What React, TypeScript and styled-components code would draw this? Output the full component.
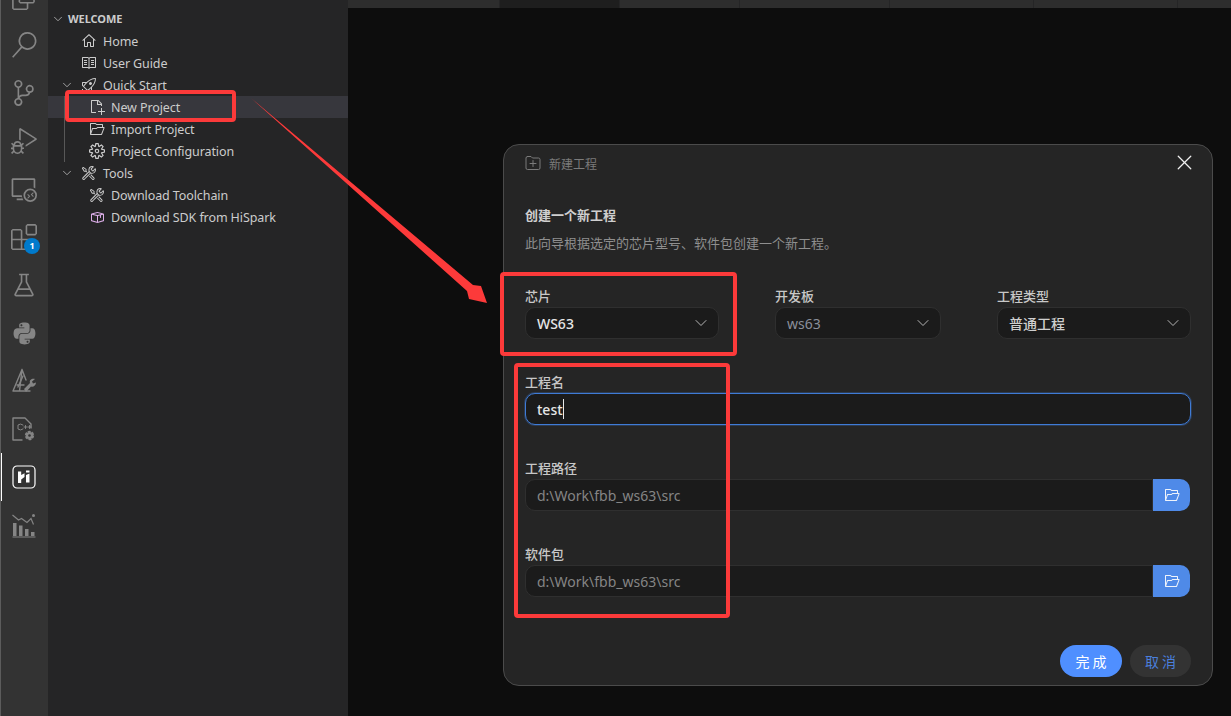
import React from 'react';
import styled, { createGlobalStyle } from 'styled-components';
import { ChevronDown, X } from 'lucide-react';
import {
  VscFiles,
  VscSearch,
  VscSourceControl,
  VscDebugAlt,
  VscRemoteExplorer,
  VscExtensions,
  VscBeaker,
  VscHome,
  VscBook,
  VscRocket,
  VscNewFile,
  VscFolderOpened,
  VscSettingsGear,
  VscTools,
  VscPackage,
} from 'react-icons/vsc';
import { FaPython } from 'react-icons/fa';

const UI_FONT = `"Noto Sans", "Noto Sans CJK SC", sans-serif`;
const CJK_FONT = `"Noto Sans CJK SC", "Noto Sans", sans-serif`;

const GlobalStyle = createGlobalStyle`
  html, body {
    margin: 0;
    height: 100%;
    overflow: hidden;
    background: #0d0d0d;
  }
  * {
    box-sizing: border-box;
  }
`;

const Screen = styled.div`
  position: relative;
  display: flex;
  width: 1231px;
  height: 716px;
  overflow: hidden;
  font-family: ${UI_FONT};
`;

const ActivityBar = styled.nav`
  flex: 0 0 48px;
  height: 100%;
  overflow: hidden;
  background: #333333;
  border-left: 1px solid #5c5c5c;
`;

const ActivityList = styled.div`
  display: flex;
  flex-direction: column;
  margin-top: -27px;
  margin-left: -1px;
`;

const ActivityItem = styled.div<{ $active?: boolean }>`
  position: relative;
  display: flex;
  align-items: center;
  justify-content: center;
  width: 48px;
  height: 48px;
  color: ${(p) => (p.$active ? '#ffffff' : '#858585')};
  border-left: 2px solid ${(p) => (p.$active ? '#ffffff' : 'transparent')};
  padding-right: 2px;
`;

const Badge = styled.span`
  position: absolute;
  left: 22px;
  top: 25px;
  width: 16px;
  height: 16px;
  border-radius: 50%;
  background: #007acc;
  color: #ffffff;
  font-size: 9px;
  font-weight: 700;
  line-height: 16px;
  text-align: center;
`;

const Sidebar = styled.aside`
  flex: 0 0 300px;
  height: 100%;
  padding-top: 8px;
  background: #252526;
`;

const SectionTitle = styled.div`
  display: flex;
  align-items: center;
  gap: 3px;
  height: 22px;
  padding: 0 0 1px 3px;
  color: #cccccc;
  font-size: 11px;
  font-weight: 700;
  letter-spacing: -0.05px;
`;

const TreeRow = styled.div<{ $depth: number; $selected?: boolean }>`
  position: relative;
  display: flex;
  align-items: center;
  height: 22px;
  padding-left: ${(p) => (p.$depth === 2 ? 41 : 11)}px;
  color: #cccccc;
  font-size: 12.5px;
  letter-spacing: -0.1px;
  background: ${(p) => (p.$selected ? '#37373d' : 'transparent')};
`;

const Twistie = styled.span`
  display: flex;
  justify-content: center;
  width: 16px;
  margin-right: 6px;
  color: #c5c5c5;
`;

const RowIcon = styled.span<{ $tint?: string }>`
  display: flex;
  align-items: center;
  justify-content: center;
  width: 16px;
  height: 16px;
  margin-right: 6px;
  color: ${(p) => p.$tint ?? '#cccccc'};
`;

const IndentGuide = styled.div`
  position: absolute;
  left: 64px;
  top: 96px;
  width: 1px;
  height: 66px;
  background: #585858;
`;

const Main = styled.main`
  flex: 1;
  height: 100%;
  background: #0d0d0d;
`;

const TabStrip = styled.div`
  display: flex;
  height: 8px;
  background: #2d2d2d;
`;

const Tab = styled.div<{ $width: number; $active?: boolean }>`
  flex: 0 0 ${(p) => p.$width}px;
  background: ${(p) => (p.$active ? '#1e1e1e' : '#2d2d2d')};
  border-right: 1px solid #252526;
`;

const Dialog = styled.section`
  position: absolute;
  left: 503px;
  top: 144px;
  width: 710px;
  height: 542px;
  padding: 0 21px;
  display: flex;
  flex-direction: column;
  background: #252525;
  border: 1px solid #4b4b4b;
  border-radius: 16px;
  font-family: ${CJK_FONT};
`;

const DialogHeader = styled.header`
  display: flex;
  align-items: center;
  gap: 8px;
  height: 36px;
  color: #7b7b7b;
  font-size: 12px;
`;

const CloseButton = styled.span`
  margin: -2px -6px 0 auto;
  display: flex;
  color: #f0f0f0;
`;

const Heading = styled.h2`
  margin: 24px 0 0;
  color: #cfcfcf;
  font-size: 13px;
  font-weight: 700;
  line-height: 20px;
`;

const Description = styled.p`
  margin: 8px 0 0;
  color: #8f8f8f;
  font-size: 13px;
  line-height: 20px;
`;

const SelectRow = styled.div`
  display: flex;
  justify-content: space-between;
  margin-top: 33px;
`;

const Field = styled.div<{ $width?: number }>`
  display: flex;
  flex-direction: column;
  width: ${(p) => (p.$width ? `${p.$width}px` : '100%')};
`;

const Label = styled.label`
  height: 21px;
  color: #c8c8c8;
  font-size: 13px;
  font-weight: 500;
  line-height: 20px;
`;

const Control = styled.div<{ $focused?: boolean; $joined?: boolean }>`
  display: flex;
  align-items: center;
  height: 32px;
  flex: ${(p) => (p.$joined ? 1 : '0 0 32px')};
  padding: 0 11px;
  background: #1b1b1b;
  border: 1px solid ${(p) => (p.$focused ? '#3f7bd6' : '#2f2f2f')};
  border-radius: ${(p) => (p.$joined ? '10px 0 0 10px' : '10px')};
  box-shadow: ${(p) => (p.$focused ? '0 0 0 1px #2c3b52' : 'none')};
  font-size: 14px;
`;

const Value = styled.span<{ $tone: 'strong' | 'muted' | 'soft' }>`
  font-family: ${UI_FONT};
  font-weight: ${(p) => (p.$tone === 'strong' ? 500 : 400)};
  color: ${(p) => (p.$tone === 'strong' ? '#e6e6e6' : p.$tone === 'soft' ? '#8a8f9a' : '#858585')};
`;

const CjkValue = styled.span`
  color: #cfcfcf;
  font-family: ${CJK_FONT};
  font-weight: 500;
`;

const Caret = styled.span`
  display: inline-block;
  width: 1px;
  height: 20px;
  background: #e8e8e8;
`;

const SelectChevron = styled(ChevronDown)`
  margin-left: auto;
  margin-right: -4px;
  color: #b5b5b5;
`;

const FormColumn = styled.div`
  display: flex;
  flex-direction: column;
  gap: 33px;
  margin-top: 33px;
`;

const InputLine = styled.div`
  display: flex;
  height: 32px;
  margin-right: 1px;
`;

const BrowseButton = styled.span`
  display: flex;
  align-items: center;
  justify-content: center;
  flex: 0 0 37px;
  background: #4f8ae8;
  border-radius: 0 10px 10px 0;
  color: #eef3fb;
`;

const Footer = styled.footer`
  display: flex;
  justify-content: flex-end;
  gap: 8px;
  margin-top: 48px;
`;

const PillButton = styled.span<{ $primary?: boolean }>`
  display: flex;
  align-items: center;
  justify-content: center;
  width: ${(p) => (p.$primary ? 62 : 61)}px;
  height: 32px;
  border-radius: 16px;
  font-size: 14px;
  letter-spacing: 3px;
  text-indent: 3px;
  background: ${(p) => (p.$primary ? '#4f8fff' : '#333333')};
  color: ${(p) => (p.$primary ? '#ffffff' : '#4a7fdc')};
`;

const Marker = styled.div<{ $x: number; $y: number; $w: number; $h: number }>`
  position: absolute;
  left: ${(p) => p.$x}px;
  top: ${(p) => p.$y}px;
  width: ${(p) => p.$w}px;
  height: ${(p) => p.$h}px;
  border: 4px solid #fc3a3a;
  border-radius: 4px;
  pointer-events: none;
`;

const ArrowLayer = styled.svg`
  position: absolute;
  left: 0;
  top: 0;
  pointer-events: none;
`;

const Stroke = { fill: 'none', stroke: 'currentColor', strokeWidth: 1.4, strokeLinecap: 'round', strokeLinejoin: 'round' } as const;

const TriangleToolIcon = () => (
  <svg width="26" height="26" viewBox="0 0 26 26" {...Stroke}>
    <path d="M11 1.500 2 23h17M11 1.500 15 12M11 1.500 8.500 23" />
    <path d="M6 17h7M12 8l-5 11" />
    <path d="m13 21 6-6c-1-3 2-5 5-4l-3 2.500 1 2 3-1c0 3-3 5-5 4l-5 5.500z" fill="currentColor" stroke="none" />
  </svg>
);
const CppFileIcon = () => (
  <svg width="26" height="26" viewBox="0 0 26 26" {...Stroke}>
    <path d="M11 24H2V2h12l6 6v4" />
    <path d="M12 9a4 4 0 0 0-5 0v4a4 4 0 0 0 5 0M13 11h3M14.500 9.500v3M17 11h3M18.500 9.500v3" strokeWidth={1} />
    <circle cx="18.500" cy="19.500" r="3" strokeWidth={3.400} strokeDasharray="2.300 .8" strokeLinecap="butt" />
    <circle cx="18.500" cy="19.500" r="3.500" fill="currentColor" stroke="none" />
    <circle cx="18.500" cy="19.500" r="1.300" fill="#333333" stroke="none" />
  </svg>
);
const HiLogo = () => (
  <svg width="24" height="24" viewBox="0 0 24 24">
    <rect x="1" y="1" width="22" height="22" rx="4" fill="none" stroke="#ffffff" strokeWidth="1.200" />
    <path d="M6 6.500h3.200v3.600l3.300-1.800v3.700l-3.300 2.400V18H6zM14 10l3.500-1.600V17.500H14zM14 5.500h3.500v2H14z" fill="#ffffff" />
  </svg>
);
const ChartIcon = () => (
  <svg width="26" height="26" viewBox="0 0 26 26" fill="currentColor">
    <path d="M2 11h3.500v13H2zM8 13.500h3.500V24H8zM14 17h3.500v7H14zM20 20h3.500v4H20zM1.500 24.500h23v1h-23z" />
    <path d="m1.500 3 6 5 3-1.500 5.500 4 4-4 2.500 6" fill="none" stroke="currentColor" strokeWidth="1.200" />
    <circle cx="22.500" cy="3.500" r="1.500" />
  </svg>
);

const NewFolderIcon = () => (
  <svg width="16" height="16" viewBox="0 0 16 16" fill="none" stroke="currentColor" strokeWidth="1" strokeLinejoin="round" strokeLinecap="round">
    <path d="M2.500 1.500h3.500l1.500 1.500h6a1.500 1.500 0 0 1 1.500 1.500v8.500a1.500 1.500 0 0 1-1.500 1.500h-11A1.500 1.500 0 0 1 1 13V3a1.500 1.500 0 0 1 1.500-1.500z" />
    <path d="M8 5.500v6M5 8.500h6" />
  </svg>
);

const tabs = [
  { width: 152 },
  { width: 120, active: true },
  { width: 120 },
  { width: 150 },
  { width: 144 },
  { width: 144 },
];

const SelectField = ({ label, width, children }: { label: string; width: number; children: React.ReactNode }) => (
  <Field $width={width}>
    <Label>{label}</Label>
    <Control>
      {children}
      <SelectChevron size={20} strokeWidth={1.2} />
    </Control>
  </Field>
);

const PathField = ({ label, value }: { label: string; value: string }) => (
  <Field>
    <Label>{label}</Label>
    <InputLine>
      <Control $joined>
        <Value $tone="muted">{value}</Value>
      </Control>
      <BrowseButton>
        <VscFolderOpened size={16} />
      </BrowseButton>
    </InputLine>
  </Field>
);

export default function App() {
  return (
    <Screen>
      <GlobalStyle />
      <ActivityBar>
        <ActivityList>
          <ActivityItem><VscFiles size={26} /></ActivityItem>
          <ActivityItem><VscSearch size={26} /></ActivityItem>
          <ActivityItem><VscSourceControl size={26} /></ActivityItem>
          <ActivityItem><VscDebugAlt size={26} /></ActivityItem>
          <ActivityItem><VscRemoteExplorer size={26} /></ActivityItem>
          <ActivityItem>
            <VscExtensions size={26} />
            <Badge>1</Badge>
          </ActivityItem>
          <ActivityItem><VscBeaker size={26} /></ActivityItem>
          <ActivityItem><FaPython size={25} /></ActivityItem>
          <ActivityItem><TriangleToolIcon /></ActivityItem>
          <ActivityItem><CppFileIcon /></ActivityItem>
          <ActivityItem $active><HiLogo /></ActivityItem>
          <ActivityItem><ChartIcon /></ActivityItem>
        </ActivityList>
      </ActivityBar>

      <Sidebar>
        <SectionTitle>
          <ChevronDown size={14} strokeWidth={1.3} color="#c5c5c5" />
          WELCOME
        </SectionTitle>
        <TreeRow $depth={1}>
          <Twistie />
          <RowIcon><VscHome size={16} /></RowIcon>
          Home
        </TreeRow>
        <TreeRow $depth={1}>
          <Twistie />
          <RowIcon><VscBook size={16} /></RowIcon>
          User Guide
        </TreeRow>
        <TreeRow $depth={1}>
          <Twistie><ChevronDown size={14} strokeWidth={1.3} /></Twistie>
          <RowIcon><VscRocket size={16} /></RowIcon>
          Quick Start
        </TreeRow>
        <TreeRow $depth={2} $selected>
          <RowIcon><VscNewFile size={16} /></RowIcon>
          New Project
        </TreeRow>
        <TreeRow $depth={2}>
          <RowIcon><VscFolderOpened size={16} /></RowIcon>
          Import Project
        </TreeRow>
        <TreeRow $depth={2}>
          <RowIcon><VscSettingsGear size={16} /></RowIcon>
          Project Configuration
        </TreeRow>
        <TreeRow $depth={1}>
          <Twistie><ChevronDown size={14} strokeWidth={1.3} /></Twistie>
          <RowIcon><VscTools size={16} /></RowIcon>
          Tools
        </TreeRow>
        <TreeRow $depth={2}>
          <RowIcon><VscTools size={16} /></RowIcon>
          Download Toolchain
        </TreeRow>
        <TreeRow $depth={2}>
          <RowIcon $tint="#dcaee8"><VscPackage size={16} /></RowIcon>
          Download SDK from HiSpark
        </TreeRow>
      </Sidebar>
      <IndentGuide />

      <Main>
        <TabStrip>
          {tabs.map((tab, i) => (
            <Tab key={i} $width={tab.width} $active={tab.active} />
          ))}
        </TabStrip>
      </Main>

      <Dialog>
        <DialogHeader>
          <NewFolderIcon />
          新建工程
          <CloseButton><X size={25} strokeWidth={1.2} /></CloseButton>
        </DialogHeader>
        <Heading>创建一个新工程</Heading>
        <Description>此向导根据选定的芯片型号、软件包创建一个新工程。</Description>
        <SelectRow>
          <SelectField label="芯片" width={194}><Value $tone="strong">WS63</Value></SelectField>
          <SelectField label="开发板" width={166}><Value $tone="soft">ws63</Value></SelectField>
          <SelectField label="工程类型" width={194}><CjkValue>普通工程</CjkValue></SelectField>
        </SelectRow>
        <FormColumn>
          <Field>
            <Label>工程名</Label>
            <Control $focused>
              <Value $tone="strong">test</Value>
              <Caret />
            </Control>
          </Field>
          <PathField label="工程路径" value="d:\Work\fbb_ws63\src" />
          <PathField label="软件包" value="d:\Work\fbb_ws63\src" />
        </FormColumn>
        <Footer>
          <PillButton $primary>完成</PillButton>
          <PillButton>取消</PillButton>
        </Footer>
      </Dialog>

      <Marker $x={65} $y={90} $w={171} $h={32} />
      <Marker $x={500} $y={272} $w={237} $h={84} />
      <Marker $x={514} $y={363} $w={216} $h={255} />
      <ArrowLayer width="1231" height="716" viewBox="0 0 1231 716">
        <polygon points="251,98 473,285 481,286 487,303 469,299 467,291" fill="#fc3a3a" />
      </ArrowLayer>
    </Screen>
  );
}
